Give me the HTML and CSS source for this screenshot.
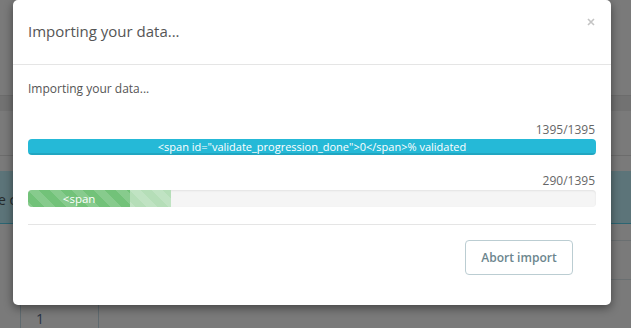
FILE: index.html
```html
<!DOCTYPE html>
<html>
<head>
<meta charset="utf-8">
<link rel="stylesheet" href="styles.css">
</head>
<body>
<div class="page">
  <div class="band b-top"></div>
  <div class="band b-head"></div>
  <div class="band b-mid"></div>
  <div class="band b-gap"></div>
  <div class="band b-alert"><span class="alert-text">e c</span></div>
  <div class="table">
    <div class="trow r1"></div>
    <div class="trow r2"></div>
    <div class="trow r3"></div>
    <div class="trow r4"><div class="cell c1">1</div><div class="cell c2"></div></div>
  </div>
</div>

<div class="modal">
  <div class="modal-header">
    <h4 class="modal-title">Importing your data...</h4>
    <span class="close"><svg width="8" height="8" viewBox="0 0 8 8"><path d="M1 1L7 7M7 1L1 7" stroke="#c4c4c4" stroke-width="1.6"/></svg></span>
  </div>
  <div class="modal-body">
    <p class="lead-text">Importing your data...</p>
    <div class="counter counter-1">1395/1395</div>
    <div class="progress">
      <div class="bar bar-info" style="width:100%">&lt;span id="validate_progression_done"&gt;0&lt;/span&gt;% validated</div>
    </div>
    <div class="counter counter-2">290/1395</div>
    <div class="progress progress-track">
      <div class="bar bar-success striped" style="width:18%">&lt;span</div>
      <div class="bar bar-success-light striped" style="width:7.2%"></div>
    </div>
  </div>
  <div class="modal-footer">
    <button class="btn">Abort import</button>
  </div>
</div>
</body>
</html>
```

FILE: styles.css
```css
html, body {
  margin: 0;
  padding: 0;
}
body {
  width: 631px;
  height: 328px;
  overflow: hidden;
  background: #7a7a7a;
  font-family: "Open Sans", "Noto Sans", sans-serif;
  position: relative;
}
.page {
  display: flex;
  flex-direction: column;
}
.band { width: 100%; }
.b-top { height: 95px; }
.b-head {
  height: 15px;
  background: #727272;
  border-top: 1px solid #6c6c6c;
}
.b-mid {
  height: 44px;
  border-bottom: 1px solid #6c6c6c;
}
.b-gap { height: 15px; }
.b-alert {
  height: 53px;
  background: #5c7479;
  border-bottom: 1px solid #2b6572;
  display: flex;
  align-items: center;
  padding-top: 2px;
  box-sizing: border-box;
}
.alert-text {
  font-size: 14px;
  color: #25292b;
  margin-left: -2px;
  margin-top: 2px;
}
.table {
  margin-left: 20px;
  display: flex;
  flex-direction: column;
}
.trow { border-bottom: 1px solid #6a6f71; }
.r1 { height: 16px; }
.r2 { height: 38px; }
.r3 { height: 24px; border-bottom: none; }
.r4 {
  height: 30px;
  display: flex;
  border-bottom: none;
}
.cell {
  border-left: 1px solid #5f6a6f;
  height: 100%;
  box-sizing: border-box;
}
.c1 {
  width: 78px;
  font-size: 14px;
  color: #273444;
  padding: 5px 0 0 15px;
}
.c2 { flex: 1; }

.modal {
  position: absolute;
  left: 13px;
  top: 0;
  width: 598px;
  height: 305px;
  background: #fff;
  border-radius: 5px;
  box-shadow: 0 3px 10px rgba(0,0,0,0.45);
  box-sizing: border-box;
  display: flex;
  flex-direction: column;
}
.modal-header {
  height: 65px;
  border-bottom: 1px solid #e5e5e5;
  box-sizing: border-box;
  padding: 0 15px;
  display: flex;
  align-items: center;
  justify-content: space-between;
}
.modal-title {
  margin: 0;
  font-size: 15px;
  font-weight: 400;
  color: #555;
  padding-bottom: 2px;
}
.close {
  display: flex;
  align-self: flex-start;
  margin-top: 18px;
  margin-right: 1px;
}
.modal-body {
  padding: 15px 15px 0;
  display: flex;
  flex-direction: column;
}
.lead-text {
  margin: 0;
  font-size: 12px;
  line-height: 18px;
  color: #555;
}
.counter {
  text-align: right;
  font-size: 12px;
  line-height: 18px;
  color: #666;
  margin-right: 1px;
}
.counter-1 { margin-top: 23px; }
.counter-2 { margin-top: 17px; }
.progress {
  height: 16px;
  border-radius: 4px;
  overflow: hidden;
  display: flex;
  background: #f5f5f5;
}
.progress-track {
  height: 17px;
  box-shadow: inset 0 1px 2px rgba(0,0,0,0.08);
}
.bar {
  height: 100%;
  color: #fff;
  font-size: 11px;
  line-height: 16px;
  text-align: center;
  white-space: nowrap;
}
.bar-info {
  background: #25b9d7;
  box-shadow: inset 0 -2px 0 rgba(0,0,0,0.1);
}
.bar-success {
  background-color: #72c279;
  font-size: 11.5px;
  line-height: 17px;
}
.bar-success-light {
  background-color: #b5deb8;
}
.striped {
  background-image: linear-gradient(45deg, rgba(255,255,255,0.15) 25%, transparent 25%, transparent 50%, rgba(255,255,255,0.15) 50%, rgba(255,255,255,0.15) 75%, transparent 75%, transparent);
  background-size: 22px 22px;
}
.modal-footer {
  margin: 17px 15px 0;
  border-top: 1px solid #e5e5e5;
  padding: 15px 23px 0 0;
  display: flex;
  justify-content: flex-end;
}
.btn {
  width: 108px;
  height: 35px;
  background: #fff;
  border: 1px solid #bbcdd2;
  border-radius: 4px;
  color: #6c868e;
  font-family: "Open Sans", "Noto Sans", sans-serif;
  font-weight: 600;
  font-size: 12px;
  padding: 0;
}
```
